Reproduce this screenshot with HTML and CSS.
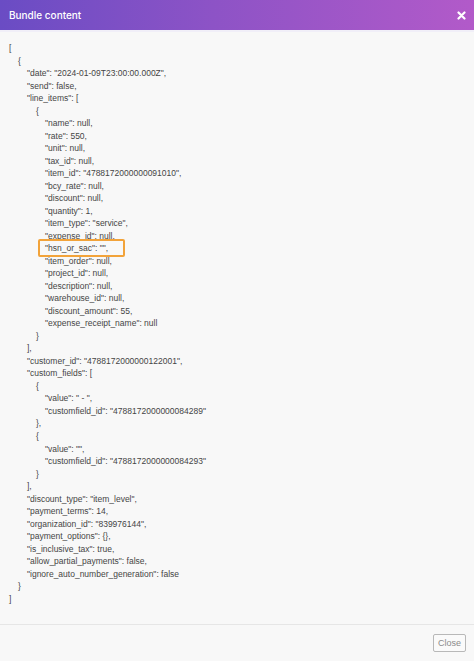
FILE: index.html
```html
<!DOCTYPE html>
<html lang="en">
    <head>
        <meta charset="UTF-8" />
        <meta name="viewport" content="width=device-width, initial-scale=1.0" />
        <title>Bundle content</title>
        <link rel="stylesheet" href="styles.css">
    </head>
    <body>
        <div class="modal">
            <div class="modal-header">
                <span class="modal-title">Bundle content</span>
                <svg class="modal-close" width="9" height="9" viewBox="0 0 9 9">
                    <path d="M1.5 1.5 L7.5 7.5 M7.5 1.5 L1.5 7.5" stroke="#fff" stroke-width="2.2" stroke-linecap="round" />
                </svg>
            </div>
            <div class="modal-body">
<pre class="json">[
	{
		"date": "2024-01-09T23:00:00.000Z",
		"send": false,
		"line_items": [
			{
				"name": null,
				"rate": 550,
				"unit": null,
				"tax_id": null,
				"item_id": "4788172000000091010",
				"bcy_rate": null,
				"discount": null,
				"quantity": 1,
				"item_type": "service",
				"expense_id": null,
				<span class="mark">"hsn_or_sac": "",</span>
				"item_order": null,
				"project_id": null,
				"description": null,
				"warehouse_id": null,
				"discount_amount": 55,
				"expense_receipt_name": null
			}
		],
		"customer_id": "4788172000000122001",
		"custom_fields": [
			{
				"value": " - ",
				"customfield_id": "4788172000000084289"
			},
			{
				"value": "",
				"customfield_id": "4788172000000084293"
			}
		],
		"discount_type": "item_level",
		"payment_terms": 14,
		"organization_id": "839976144",
		"payment_options": {},
		"is_inclusive_tax": true,
		"allow_partial_payments": false,
		"ignore_auto_number_generation": false
	}
]</pre>
            </div>
            <div class="modal-footer">
                <button class="btn-close">Close</button>
            </div>
        </div>
    </body>
</html>
```

FILE: styles.css
```css
* {
    margin: 0;
    padding: 0;
    box-sizing: border-box;
}
body {
    background-color: #f8f8f8;
}
.modal {
    display: flex;
    flex-direction: column;
    height: 661px;
    background-color: #f8f8f8;
}
.modal-header {
    display: flex;
    justify-content: space-between;
    align-items: center;
    height: 32px;
    padding: 0 8px 0 9px;
    background: linear-gradient(90deg, #6a4cc4 0%, #8d53c6 45%, #b25ac9 100%);
    border-bottom: 2px solid #f1eff8;
}
.modal-title {
    color: #fff;
    font-family: Inter, "Noto Sans", sans-serif;
    font-size: 10px;
    font-weight: 500;
}
.modal-close {
    cursor: pointer;
}
.modal-body {
    flex: 1;
    padding: 10px 9px 8px;
}
.json {
    font-family: "Liberation Sans", Arial, sans-serif;
    font-size: 8.5px;
    line-height: 12.52px;
    color: #454545;
    tab-size: 9px;
}
.mark {
    position: relative;
}
.mark::after {
    content: "";
    position: absolute;
    top: -4px;
    bottom: -4px;
    left: -7px;
    right: -17px;
    border: 2px solid #f2a33a;
    border-radius: 2px;
}
.modal-footer {
    display: flex;
    justify-content: flex-end;
    align-items: center;
    height: 37px;
    padding: 0 8px;
    border-top: 1px solid #e6e6e6;
}
.btn-close {
    width: 33px;
    height: 18px;
    font-family: "Liberation Sans", Arial, sans-serif;
    font-size: 9px;
    color: #8a8a8a;
    background-color: #fafafa;
    border: 1px solid #b8b8b8;
    border-radius: 2px;
}
```
